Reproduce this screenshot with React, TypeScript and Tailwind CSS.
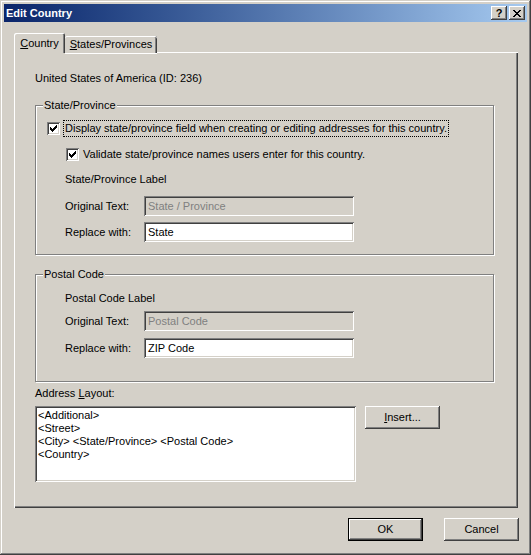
import React from 'react';

const raised =
  'shadow-[inset_-1px_-1px_#404040,inset_1px_1px_#ffffff,inset_-2px_-2px_#808080,inset_2px_2px_#d4d0c8]';
const sunken =
  'shadow-[inset_1px_1px_#808080,inset_-1px_-1px_#ffffff,inset_2px_2px_#404040,inset_-2px_-2px_#d4d0c8]';
const etched = 'border border-[#808080] shadow-[inset_1px_1px_#ffffff,1px_1px_#ffffff]';

function Check({ className }: { className?: string }) {
  return (
    <div className={`relative w-[13px] h-[13px] bg-white shrink-0 ${sunken} ${className ?? ''}`}>
      <svg className="absolute left-[3px] top-[3px]" width="7" height="7" viewBox="0 0 7 7">
        <path d="M0 2h1v1h1v1h1V3h1V2h1V1h1V0h1v3H6v1H5v1H4v1H3v1H2V6H1V5H0z" fill="#000" />
      </svg>
    </div>
  );
}

function Field({ label, value, disabled }: { label: string; value: string; disabled?: boolean }) {
  return (
    <div className="flex items-center h-[20px] pl-[29px]">
      <span className="w-[79px]">{label}</span>
      <div
        className={`w-[210px] h-[20px] flex items-center px-[4px] ${sunken} ${
          disabled ? 'bg-[#d4d0c8] text-[#808080]' : 'bg-white text-black'
        }`}
      >
        {value}
      </div>
    </div>
  );
}

function Group({ title, className, children }: { title: string; className: string; children: React.ReactNode }) {
  return (
    <div className={`relative w-[459px] ${etched} ${className}`}>
      <span className="absolute left-[7px] -top-[7px] px-[1px] bg-[#d4d0c8] leading-[13px]">{title}</span>
      {children}
    </div>
  );
}

function Button({ children, className }: { children: React.ReactNode; className?: string }) {
  return (
    <div className={`w-[75px] h-[23px] flex items-center justify-center bg-[#d4d0c8] ${raised} ${className ?? ''}`}>
      {children}
    </div>
  );
}

export default function App() {
  return (
    <div
      className="w-[531px] h-[555px] bg-[#d4d0c8] p-[4px] flex flex-col text-[11px] leading-[13px] text-black shadow-[inset_-1px_-1px_#404040,inset_1px_1px_#d4d0c8,inset_-2px_-2px_#808080,inset_2px_2px_#ffffff]"
      style={{ fontFamily: '"Liberation Sans", Arial, sans-serif' }}
    >
      {/* Title bar */}
      <div className="h-[18px] flex items-center justify-between pl-[2px] pr-[2px] bg-gradient-to-r from-[#0a246a] to-[#a6caf0]">
        <span className="text-white font-bold">Edit Country</span>
        <div className="flex items-center gap-[2px]">
          <div className={`w-[16px] h-[14px] flex items-center justify-center bg-[#d4d0c8] font-bold text-[11px] ${raised}`}>?</div>
          <div className={`w-[16px] h-[14px] flex items-center justify-center bg-[#d4d0c8] ${raised}`}>
            <svg width="8" height="7" viewBox="0 0 8 7">
              <path d="M0 0h2v1h1v1h2V1h1V0h2v1H7v1H6v1H5v1h1v1h1v1h1v1H6V6H5V5H3v1H2v1H0V6h1V5h1V4h1V3H2V2H1V1H0z" fill="#000" />
            </svg>
          </div>
        </div>
      </div>

      <div className="flex flex-col pl-[10px] pt-[11px]">
        {/* Tabs */}
        <div className="flex items-end h-[20px] relative z-10">
          <div className="h-[20px] w-[51px] bg-[#d4d0c8] flex items-start pt-[4px] justify-center rounded-t-[2px] shadow-[inset_1px_1px_#ffffff,inset_-1px_0_#404040,inset_-2px_0_#808080]">
            <span>
              <span className="underline">C</span>ountry
            </span>
          </div>
          <div className="h-[17px] w-[92px] bg-[#d4d0c8] flex items-start pt-[2px] justify-center rounded-t-[2px] shadow-[inset_0_1px_#ffffff,inset_-1px_0_#404040,inset_-2px_0_#808080,0_1px_#ffffff]">
            <span>
              <span className="underline">S</span>tates/Provinces
            </span>
          </div>
        </div>

        {/* Panel */}
        <div className="w-[504px] h-[456px] -mt-[1px] flex flex-col pl-[21px] pt-[20px] shadow-[inset_1px_1px_#ffffff,inset_-1px_-1px_#404040,inset_-2px_-2px_#808080]">
          <div>United States of America (ID: 236)</div>

          <Group title="State/Province" className="mt-[20px] h-[150px]">
            <div className="flex items-center h-[13px] mt-[16px] pl-[11px]">
              <Check />
              <span className="ml-[3px] px-[1px] py-[1px] -my-[2px] border border-dotted border-black">
                Display state/province field when creating or editing addresses for this country.
              </span>
            </div>
            <div className="flex items-center h-[13px] mt-[13px] pl-[30px]">
              <Check />
              <span className="ml-[4px]">Validate state/province names users enter for this country.</span>
            </div>
            <div className="mt-[12px] pl-[29px]">State/Province Label</div>
            <div className="mt-[10px]">
              <Field label="Original Text:" value="State / Province" disabled />
            </div>
            <div className="mt-[6px]">
              <Field label="Replace with:" value="State" />
            </div>
          </Group>

          <Group title="Postal Code" className="mt-[19px] h-[108px]">
            <div className="mt-[17px] pl-[29px]">Postal Code Label</div>
            <div className="mt-[6px]">
              <Field label="Original Text:" value="Postal Code" disabled />
            </div>
            <div className="mt-[7px]">
              <Field label="Replace with:" value="ZIP Code" />
            </div>
          </Group>

          <div className="mt-[5px]">
            Address <span className="underline">L</span>ayout:
          </div>

          <div className="flex items-start mt-[6px]">
            <div className={`w-[321px] h-[76px] bg-white px-[3px] pt-[3px] ${sunken}`}>
              <div>&lt;Additional&gt;</div>
              <div>&lt;Street&gt;</div>
              <div>&lt;City&gt; &lt;State/Province&gt; &lt;Postal Code&gt;</div>
              <div>&lt;Country&gt;</div>
            </div>
            <Button className="ml-[9px] h-[23px]">
              <span>
                <span className="underline">I</span>nsert...
              </span>
            </Button>
          </div>
        </div>

        {/* Bottom buttons */}
        <div className="flex justify-end gap-[21px] mt-[10px] w-[505px]">
          <div className="w-[75px] h-[23px] flex items-center justify-center bg-[#d4d0c8] border border-black shadow-[inset_-1px_-1px_#404040,inset_1px_1px_#ffffff,inset_-2px_-2px_#808080]">
            OK
          </div>
          <Button>Cancel</Button>
        </div>
      </div>
    </div>
  );
}
